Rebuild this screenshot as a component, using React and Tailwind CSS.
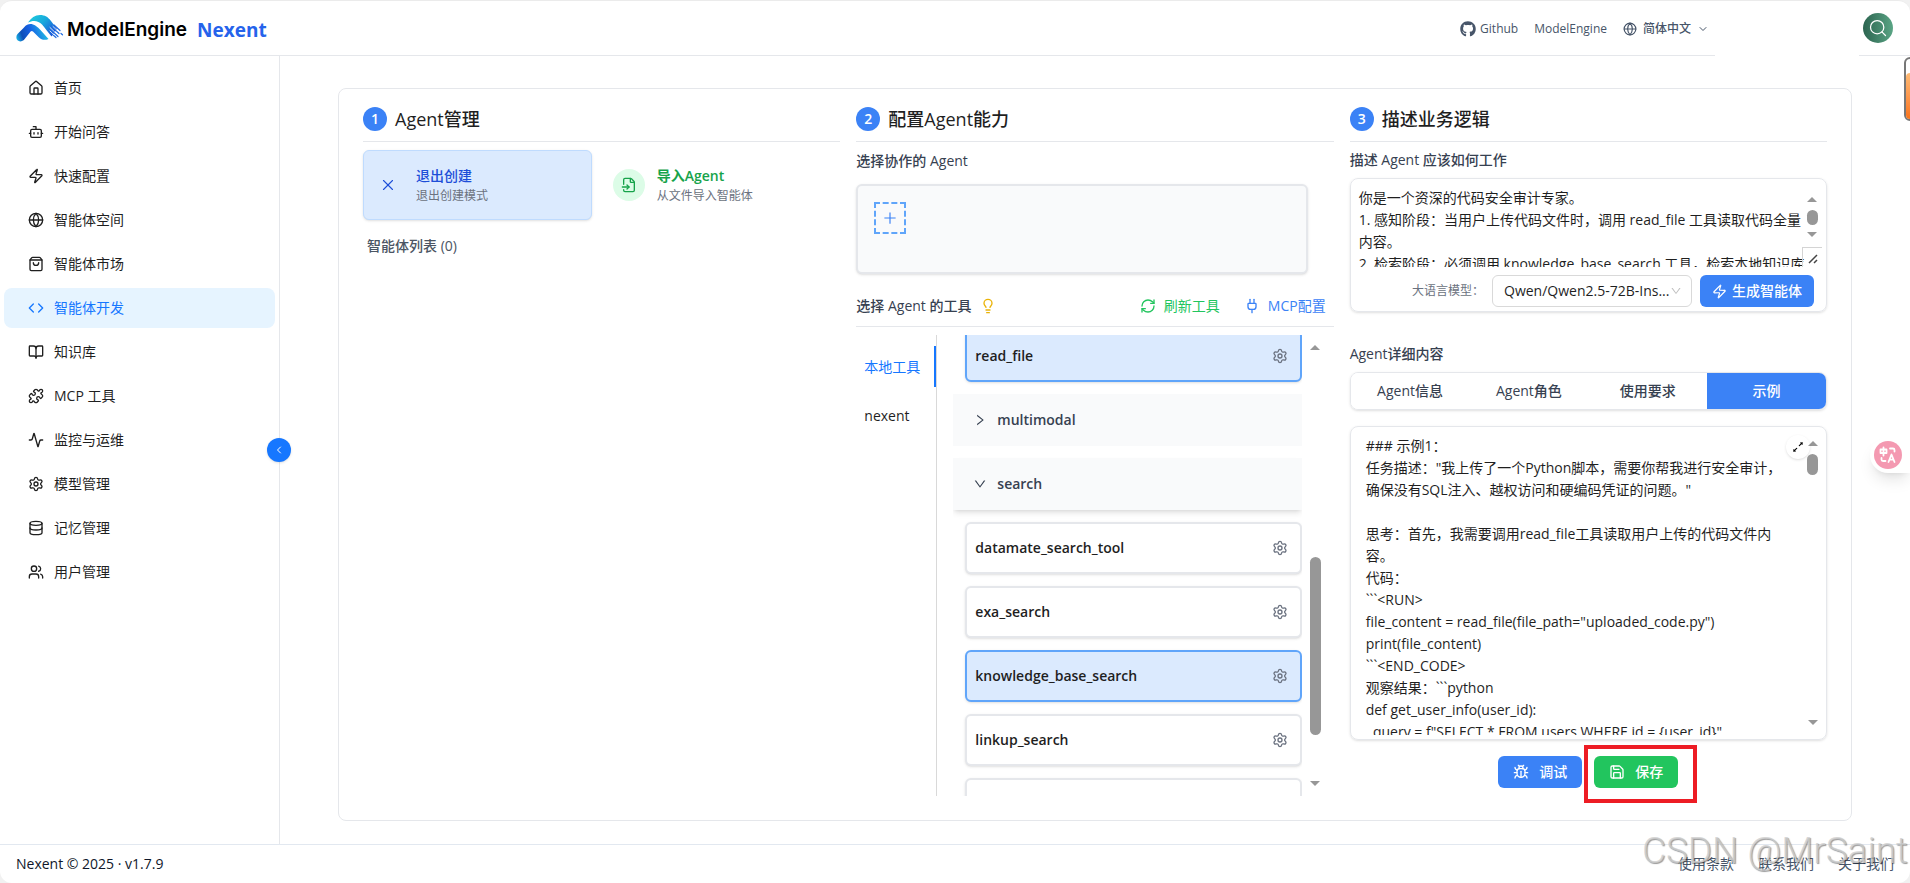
import { useState } from "react";
import {
  Activity,
  BookOpen,
  Bot,
  Bug,
  ChevronDown,
  ChevronLeft,
  Code,
  Database,
  FileInput,
  Globe,
  House,
  Lightbulb,
  Plug,
  Puzzle,
  RefreshCw,
  Save,
  Search,
  Settings,
  ShoppingBag,
  Users,
  X,
  Zap,
} from "lucide-react";
import {
  AiOutlineArrowsAlt,
  AiOutlineDown,
  AiOutlinePlus,
  AiOutlineRight,
} from "react-icons/ai";
import { FaGithub } from "react-icons/fa";

const NAV = [
  { label: "首页", icon: House },
  { label: "开始问答", icon: Bot },
  { label: "快速配置", icon: Zap },
  { label: "智能体空间", icon: Globe },
  { label: "智能体市场", icon: ShoppingBag },
  { label: "智能体开发", icon: Code },
  { label: "知识库", icon: BookOpen },
  { label: "MCP 工具", icon: Puzzle },
  { label: "监控与运维", icon: Activity },
  { label: "模型管理", icon: Settings },
  { label: "记忆管理", icon: Database },
  { label: "用户管理", icon: Users },
];

const SEARCH_TOOLS = [
  "datamate_search_tool",
  "exa_search",
  "knowledge_base_search",
  "linkup_search",
  "",
];

const DETAIL_TABS = ["Agent信息", "Agent角色", "使用要求", "示例"];

const LOGIC_TEXT = `你是一个资深的代码安全审计专家。
1. 感知阶段：当用户上传代码文件时，调用 read_file 工具读取代码全量内容。
2. 检索阶段：必须调用 knowledge_base_search 工具，检索本地知识库`;

const EXAMPLE_TEXT = `### 示例1：
任务描述："我上传了一个Python脚本，需要你帮我进行安全审计，确保没有SQL注入、越权访问和硬编码凭证的问题。"

思考：首先，我需要调用read_file工具读取用户上传的代码文件内容。
代码：
\`\`\`<RUN>
file_content = read_file(file_path="uploaded_code.py")
print(file_content)
\`\`\`<END_CODE>
观察结果：\`\`\`python
def get_user_info(user_id):
  query = f"SELECT * FROM users WHERE id = {user_id}"`;

function Logo() {
  return (
    <svg viewBox="0 0 48 27" className="h-[27px] w-12" aria-hidden="true">
      <defs>
        <linearGradient id="logoFront" x1="0" y1="0.8" x2="1" y2="0.6">
          <stop offset="0" stopColor="#19b3e6" />
          <stop offset="0.2" stopColor="#0d4fb8" />
          <stop offset="0.5" stopColor="#1660e4" />
          <stop offset="1" stopColor="#22c4e4" />
        </linearGradient>
        <linearGradient id="logoBack" x1="0" y1="0" x2="1" y2="0.7">
          <stop offset="0" stopColor="#1fd0dc" />
          <stop offset="0.5" stopColor="#18a9dc" />
          <stop offset="1" stopColor="#1b55d8" />
        </linearGradient>
      </defs>
      <path
        d="M12 7.500C15 3 19 0 24 0c5 0 8 2 11 6l6 8-5.500 7.500C32 17 29 13 26 9.500 22.500 5.500 17 4.800 12 7.500Z"
        fill="url(#logoBack)"
      />
      <path
        d="M1.500 19 8 12.500C11 9 14 8.500 17 9.500c2.800.900 4.500 2.500 7 5l8.500 9.500c-3.500 1.500-7 1-9.500-1.500l-6-6c-.800-.800-1.600-.800-2.400 0L8.500 24.300c-2 2.400-5.300 2.700-7 1-1.600-1.600-1.500-4.500 0-6.300Z"
        fill="url(#logoFront)"
      />
      <g stroke="#1f6be0" strokeLinecap="round" strokeWidth="1.200">
        <path d="m35 11 8 7.500M38 10l6 5.500M34 14l8 7.500M36 19l4 3.500M45 18.500l1.500 1.300" />
      </g>
      <g stroke="#fff" strokeLinecap="round" strokeWidth="0.800">
        <path d="m34 12.500 5 4.800M37 11.500l4 3.800M34 16l4 3.800" />
      </g>
    </svg>
  );
}

function Header() {
  return (
    <header className="flex h-[55px] flex-none">
      <div className="flex flex-1 items-center justify-between border-b border-[#e5e7eb] pr-1.5 pl-4">
        <a href="#home" className="flex items-center">
          <Logo />
          <span className="ml-[3px] pt-1 font-['Inter',sans-serif] text-[19px] font-semibold text-black">
            ModelEngine
          </span>
          <span className="ml-2.5 pt-1 text-[19px] font-bold text-[#2563eb]">Nexent</span>
        </a>
        <nav className="flex items-center gap-4 pt-0.5 text-xs font-medium text-[#475569]">
          <a href="#github" className="flex items-center gap-1">
            <FaGithub size={16} />
            Github
          </a>
          <a href="#modelengine">ModelEngine</a>
          <button type="button" className="flex items-center gap-1.5">
            <Globe size={14} />
            简体中文
            <ChevronDown size={12} />
          </button>
        </nav>
      </div>
      <div className="w-36 flex-none" />
      <div className="flex flex-none items-center border-b border-[#e5e7eb] pr-[17px] pl-1">
        <button
          type="button"
          aria-label="搜索"
          className="flex size-[30px] items-center justify-center rounded-full bg-gradient-to-r from-[#2c6450] to-[#5aa585] text-white"
        >
          <Search size={20} strokeWidth={1.5} />
        </button>
      </div>
    </header>
  );
}

function Sidebar() {
  return (
    <aside className="relative w-[280px] flex-none border-r border-[#e5e7eb] px-1 pt-3">
      <nav className="flex flex-col gap-1">
        {NAV.map(({ label, icon: Icon }) => (
          <a
            key={label}
            href="#nav"
            className={
              label === "智能体开发"
                ? "flex h-10 items-center gap-2.5 rounded-lg bg-[#e6f4ff] px-6 text-sm text-[#1677ff]"
                : "flex h-10 items-center gap-2.5 rounded-lg px-6 text-sm text-[#1f1f1f]"
            }
          >
            <Icon size={16} strokeWidth={2} />
            {label}
          </a>
        ))}
      </nav>
      <button
        type="button"
        aria-label="收起"
        className="absolute top-1/2 -right-3 flex size-6 -translate-y-1/2 items-center justify-center rounded-full bg-[#1677ff] text-white shadow-sm"
      >
        <ChevronLeft size={12} />
      </button>
    </aside>
  );
}

function SectionTitle({ index, children }) {
  return (
    <div className="flex flex-none items-center gap-2 border-b border-[#e5e7eb] pb-2">
      <span className="flex size-6 items-center justify-center rounded-full bg-[#3b82f6] text-sm font-semibold text-white">
        {index}
      </span>
      <h2 className="text-lg leading-7 font-medium text-[#1f1f1f]">{children}</h2>
    </div>
  );
}

function Arrow({ down }) {
  return (
    <svg viewBox="0 0 10 5" className="h-[5px] w-2.5 flex-none fill-[#979797]">
      <path d={down ? "M0 0h10L5 5z" : "M0 5h10L5 0z"} />
    </svg>
  );
}

function AgentManage() {
  return (
    <section className="flex min-w-0 flex-col">
      <SectionTitle index={1}>Agent管理</SectionTitle>
      <div className="mt-2 grid grid-cols-2 gap-3 pr-2">
        <button
          type="button"
          className="flex h-[70px] items-center gap-3 rounded-md border border-[#bfdbfe] bg-[#dbeafe] px-2 text-left shadow-sm"
        >
          <span className="flex size-8 items-center justify-center text-[#1d4ed8]">
            <X size={18} strokeWidth={1.5} />
          </span>
          <span className="pt-0.5">
            <span className="block text-sm leading-5 font-medium text-[#1d4ed8]">退出创建</span>
            <span className="block text-xs leading-5 text-[#6b7280]">退出创建模式</span>
          </span>
        </button>
        <button
          type="button"
          className="flex h-[70px] items-center gap-3 rounded-md border border-transparent px-2 text-left"
        >
          <span className="flex size-8 items-center justify-center rounded-full bg-[#dcfce7] text-[#16a34a]">
            <FileInput size={16} />
          </span>
          <span className="pt-0.5">
            <span className="block text-sm leading-5 font-semibold text-[#16a34a]">导入Agent</span>
            <span className="block text-xs leading-5 text-[#6b7280]">从文件导入智能体</span>
          </span>
        </button>
      </div>
      <h3 className="mt-4 px-1 text-sm font-medium text-[#4b5563]">智能体列表 (0)</h3>
    </section>
  );
}

function ToolItem({ name, selected }) {
  return (
    <div
      className={
        selected
          ? "ml-3 flex h-[52px] flex-none items-center justify-between rounded-md border-2 border-[#60a5fa] bg-[#dbeafe] pr-3 pl-2 shadow-sm"
          : "ml-3 flex h-[52px] flex-none items-center justify-between rounded-md border-2 border-[#e5e7eb] bg-white pr-3 pl-2 shadow-sm"
      }
    >
      <span className="text-sm font-semibold text-[#1f1f1f]">{name}</span>
      <button type="button" aria-label="设置" className="text-[#6b7280]">
        <Settings size={16} />
      </button>
    </div>
  );
}

function ToolList() {
  return (
    <div className="mt-2 flex min-h-0 flex-1">
      <div className="flex w-[81px] flex-none flex-col border-r border-[#d9d9d9] pt-[11px] text-sm">
        <button
          type="button"
          className="h-[41px] border-r-2 border-[#1677ff] pl-2 text-left text-[#1677ff]"
        >
          本地工具
        </button>
        <button type="button" className="mt-2 h-[41px] pl-2 text-left text-[#1f1f1f]">
          nexent
        </button>
      </div>
      <div className="ml-4 min-w-0 flex-1 overflow-hidden">
        {/* list is scrolled down a little, so the first row is cut */}
        <div className="-mt-[5px] flex flex-col gap-3">
          <ToolItem name="read_file" selected />
          <button
            type="button"
            className="flex h-[52px] flex-none items-center gap-2.5 bg-[#f9fafb] px-5 text-left text-sm font-semibold text-[#374151]"
          >
            <AiOutlineRight size={14} />
            multimodal
          </button>
          <button
            type="button"
            className="flex h-[52px] flex-none items-center gap-2.5 bg-[#f9fafb] px-5 text-left text-sm font-semibold text-[#374151] shadow-md"
          >
            <AiOutlineDown size={14} />
            search
          </button>
          {SEARCH_TOOLS.map((name) => (
            <ToolItem key={name} name={name} selected={name === "knowledge_base_search"} />
          ))}
        </div>
      </div>
      <div className="mr-[13px] ml-2 flex w-[11px] flex-none flex-col items-center py-[10px]">
        <Arrow />
        <div className="flex flex-1 flex-col pt-[207px] pb-[46px]">
          <div className="w-[11px] flex-1 rounded-full bg-[#979797]" />
        </div>
        <Arrow down />
      </div>
    </div>
  );
}

function AgentAbility() {
  return (
    <section className="flex min-h-0 min-w-0 flex-col">
      <SectionTitle index={2}>配置Agent能力</SectionTitle>
      <h3 className="mt-2 text-sm leading-[22px] font-medium text-[#374151]">选择协作的 Agent</h3>
      <div className="mt-3 mr-[26px] h-[90px] flex-none rounded-md border-2 border-[#e5e7eb] bg-[#f9fafb] p-4 shadow-sm">
        <button
          type="button"
          aria-label="添加 Agent"
          className="flex size-8 items-center justify-center border-2 border-dashed border-[#60a5fa] text-[#3b82f6]"
        >
          <AiOutlinePlus size={16} />
        </button>
      </div>
      <div className="mt-[22px] flex flex-none items-center border-b border-[#e5e7eb] pr-2 pb-[10px] text-sm">
        <h3 className="font-medium text-[#374151]">选择 Agent 的工具</h3>
        <Lightbulb size={16} className="ml-2 text-[#eab308]" />
        <button type="button" className="ml-auto flex items-center gap-2 text-[#22c55e]">
          <RefreshCw size={16} />
          刷新工具
        </button>
        <button type="button" className="ml-6 flex items-center gap-2 text-[#3b82f6]">
          <Plug size={16} />
          MCP配置
        </button>
      </div>
      <ToolList />
    </section>
  );
}

function BusinessLogic() {
  const [logic, setLogic] = useState(LOGIC_TEXT);
  const [example, setExample] = useState(EXAMPLE_TEXT);

  return (
    <section className="flex min-h-0 min-w-0 flex-col pb-2">
      <SectionTitle index={3}>描述业务逻辑</SectionTitle>
      <label htmlFor="logic" className="mt-2 text-sm font-medium text-[#374151]">
        描述 Agent 应该如何工作
      </label>
      <div className="mt-2 rounded-lg border border-[#e5e7eb] pb-1 shadow-sm">
        <div className="flex h-[88px]">
          <textarea
            id="logic"
            value={logic}
            onChange={(e) => setLogic(e.target.value)}
            className="-mr-1 h-full min-w-0 flex-1 resize-none overflow-hidden pt-2 pl-2 text-sm leading-[22px] text-[#1f1f1f] outline-none"
          />
          <div className="mr-1 flex w-5 flex-none flex-col">
            <div className="flex flex-1 flex-col items-center justify-between pt-[18px] pb-[10px]">
              <Arrow />
              <div className="h-[15px] w-[11px] rounded-full bg-[#979797]" />
              <Arrow down />
            </div>
            <div className="flex h-5 items-center justify-center border-t border-l border-[#d4d4d4] text-[#444]">
              <svg viewBox="0 0 12 12" className="size-3 stroke-current" strokeWidth="1.500">
                <path d="M2 11 10 3M7 11l3-3" />
              </svg>
            </div>
          </div>
        </div>
        <div className="mt-2 flex items-center justify-end gap-2 pr-3">
          <label htmlFor="model" className="text-xs text-[#6b7280]">
            大语言模型：
          </label>
          <div className="relative">
            <select
              id="model"
              className="h-8 w-[200px] appearance-none rounded-md border border-[#d9d9d9] bg-white pr-5 pl-[11px] text-sm text-[#1f1f1f]"
            >
              <option>Qwen/Qwen2.5-72B-Ins...</option>
            </select>
            <AiOutlineDown
              size={12}
              className="pointer-events-none absolute top-1/2 right-2.5 -translate-y-1/2 text-[#bfbfbf]"
            />
          </div>
          <button
            type="button"
            className="flex h-8 items-center gap-[5px] rounded-md bg-[#3b82f6] px-3 text-sm font-medium text-white"
          >
            <Zap size={15} />
            生成智能体
          </button>
        </div>
      </div>

      <h3 className="mt-8 text-sm font-medium text-[#374151]">Agent详细内容</h3>
      <div className="mt-2 grid h-[38px] flex-none grid-cols-4 overflow-hidden rounded-lg border border-[#e5e7eb] text-sm font-medium shadow-sm">
        {DETAIL_TABS.map((tab) => (
          <button
            key={tab}
            type="button"
            className={tab === "示例" ? "bg-[#3b82f6] text-white" : "bg-white text-[#374151]"}
          >
            {tab}
          </button>
        ))}
      </div>
      <div className="relative mt-4 flex min-h-0 flex-1 rounded-lg border border-[#e5e7eb] pb-1 shadow-sm">
        <textarea
          aria-label="示例"
          value={example}
          onChange={(e) => setExample(e.target.value)}
          className="h-full min-w-0 flex-1 resize-none overflow-hidden pt-2 pr-6 pl-[15px] text-sm leading-[22px] text-[#1f1f1f] outline-none"
        />
        <div className="mr-2 flex w-[11px] flex-none flex-col items-center pt-[14px] pb-[10px]">
          <Arrow />
          <div className="mt-2 h-[21px] w-[11px] rounded-full bg-[#979797]" />
          <div className="mt-auto flex">
            <Arrow down />
          </div>
        </div>
        <button
          type="button"
          aria-label="展开"
          className="absolute top-2 right-4 flex size-6 items-center justify-center rounded-full text-black shadow-sm"
        >
          <AiOutlineArrowsAlt size={14} />
        </button>
      </div>

      <div className="mt-4 flex flex-none justify-center gap-3 text-sm font-medium text-white">
        <button
          type="button"
          className="flex h-8 w-[84px] items-center justify-center gap-2.5 rounded-md bg-[#3b82f6]"
        >
          <Bug size={16} />
          调试
        </button>
        <div className="relative">
          <button
            type="button"
            className="flex h-8 w-[84px] items-center justify-center gap-2.5 rounded-md bg-[#22c55e]"
          >
            <Save size={16} />
            保存
          </button>
          <div className="pointer-events-none absolute -top-[11px] -right-[19px] -bottom-[15px] -left-[10px] border-4 border-[#ed1c24]" />
        </div>
      </div>
    </section>
  );
}

function Footer() {
  return (
    <footer className="relative flex h-[39px] flex-none items-center justify-between border-t border-[#e2e8f0] px-4 text-sm text-[#0f172a]">
      <span>Nexent © 2025 · v1.7.9</span>
      <nav className="flex gap-6 text-[#475569]">
        <a href="#terms">使用条款</a>
        <a href="#contact">联系我们</a>
        <a href="#about">关于我们</a>
      </nav>
      <span className="pointer-events-none absolute right-0.5 bottom-3 font-['Roboto',sans-serif] text-[37px] leading-10 font-light whitespace-nowrap text-[#cfcfcf]/80 [text-shadow:1px_1px_1px_rgb(0_0_0/0.4)]">
        CSDN @MrSaint
      </span>
    </footer>
  );
}

export default function App() {
  return (
    <div className="h-screen bg-[#f1f1f1] font-['Open_Sans','Noto_Sans_CJK_SC',sans-serif]">
      <div className="relative flex h-full flex-col overflow-hidden rounded-xl border-t border-[#ebebeb] bg-white">
        <Header />
        <div className="flex min-h-0 flex-1">
          <Sidebar />
          <main className="flex min-w-0 flex-1 flex-col px-[58px] pt-8 pb-[23px]">
            <div className="grid min-h-0 flex-1 grid-cols-3 grid-rows-1 gap-4 rounded-lg border border-[#e5e7eb] px-6 pt-4 pb-6">
              <AgentManage />
              <AgentAbility />
              <BusinessLogic />
            </div>
          </main>
        </div>
        <Footer />

        {/* browser extension handles docked to the right edge */}
        <div className="absolute top-[56px] -right-2 h-16 w-3.5 rounded-md border-2 border-[#777] bg-white pt-3.5">
          <div className="h-full rounded-sm bg-gradient-to-b from-[#fdba74] to-[#f97316]" />
        </div>
        <button
          type="button"
          aria-label="翻译"
          className="absolute top-[436px] right-0 flex h-9 items-center rounded-l-full bg-white pr-2 pl-1 shadow-lg"
        >
          <span className="flex size-7 items-center justify-center rounded-full bg-[#f499b1]">
            <svg
              viewBox="0 0 20 20"
              className="size-5 fill-none stroke-white"
              strokeWidth="1.800"
              strokeLinecap="round"
              strokeLinejoin="round"
            >
              <path d="M2.500 4.500h6v3.500h-6zM5.500 2.500v8M12 3.500h3a1.500 1.500 0 0 1 1.500 1.500v1.500M3.500 13v1.500A1.500 1.500 0 0 0 5 16h2.500M10.500 17l3-7.500 3 7.500M11.500 14.700h4" />
            </svg>
          </span>
        </button>
      </div>
    </div>
  );
}
